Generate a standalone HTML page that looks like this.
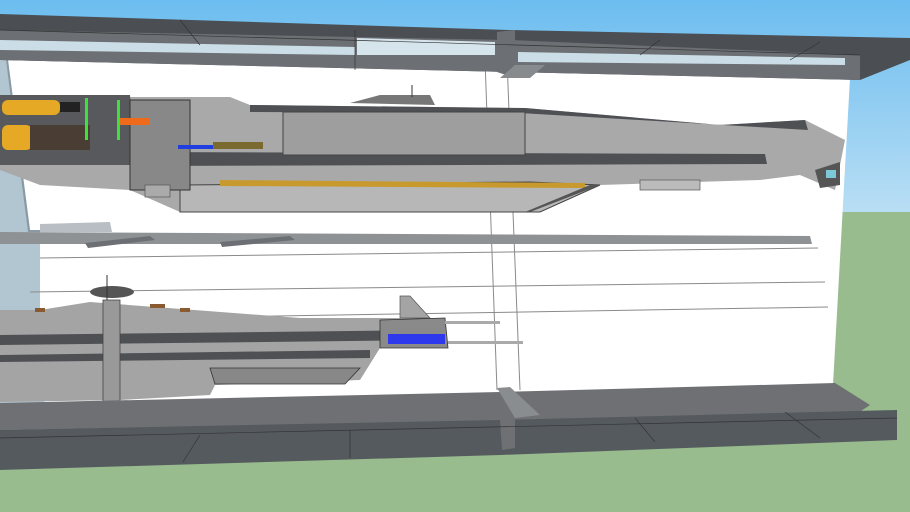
<!DOCTYPE html>
<html><head><meta charset="utf-8"><style>
html,body{margin:0;padding:0;width:910px;height:512px;overflow:hidden;background:#98bc8e}
svg{display:block}
</style></head><body>
<svg width="910" height="512" viewBox="0 0 910 512" xmlns="http://www.w3.org/2000/svg">
<defs>
<linearGradient id="sky" x1="0" y1="0" x2="0" y2="1">
<stop offset="0" stop-color="#6cbdf0"/><stop offset="1" stop-color="#b9def4"/>
</linearGradient>
</defs>
<rect width="910" height="512" fill="#98bc8e"/>
<rect width="910" height="212" fill="url(#sky)"/>
<rect x="0" y="212" width="910" height="300" fill="#98bc8e"/>
<!-- white wall -->
<polygon points="0,60 850,78 833,385 42,410 0,410" fill="#ffffff"/>
<!-- left bluish wedge -->
<polygon points="0,60 8,60 30,230 40,230 40,330 45,410 0,410" fill="#b2c6d2"/>
<polygon points="8,60 30,230 40,230 40,232 28,232 6,60" fill="#8a9aa4"/>
<!-- wall lines -->
<g stroke="#8a8a8a" stroke-width="1" fill="none">
<line x1="40" y1="258" x2="818" y2="248"/>
<line x1="30" y1="292" x2="825" y2="282"/>
<line x1="30" y1="320" x2="828" y2="307"/>
<line x1="485" y1="60" x2="497" y2="390"/>
<line x1="507" y1="60" x2="520" y2="390"/>
</g>
<!-- top slab -->
<polygon points="0,14 510,30 910,38 910,60 860,80 510,72 0,60" fill="#4b4e53"/>
<polygon points="0,30 510,40 860,55 860,80 510,72 0,60" fill="#6c6f73"/>
<polygon points="0,40 355,47 355,55 0,50" fill="#cbdde6"/>
<polygon points="357,38 495,42 495,55 357,55" fill="#d6e4ec"/>
<polygon points="518,52 845,58 845,65 518,62" fill="#cbdde6"/>
<polygon points="497,32 515,30 515,78 497,72" fill="#6c6f73"/>
<polygon points="515,65 545,65 530,78 500,78" fill="#888b8e"/>
<g stroke="#333" stroke-width="0.7">
<line x1="0" y1="30" x2="860" y2="55"/>
<line x1="180" y1="20" x2="200" y2="45"/>
<line x1="355" y1="30" x2="355" y2="70"/>
<line x1="660" y1="40" x2="640" y2="55"/>
<line x1="820" y1="42" x2="790" y2="60"/>
</g>
<!-- mid strip -->
<polygon points="0,232 810,236 812,244 0,244" fill="#8f9295"/>
<polygon points="85,243 150,236 155,240 88,248" fill="#6c6f73"/>
<polygon points="220,242 290,236 295,240 222,247" fill="#6c6f73"/>
<polygon points="40,224 110,222 112,232 40,232" fill="#b8bec4"/>
<!-- upper ship -->
<polygon points="0,170 40,185 130,190 180,212 530,212 600,185 760,180 800,175 835,190 845,140 805,120 720,125 525,108 250,105 230,97 130,97 0,100" fill="#a9a9a9"/>
<polygon points="250,105 525,108 720,125 805,120 808,130 520,113 250,112" fill="#4e5054"/>
<polygon points="180,185 530,182 600,185 540,212 180,212" fill="#b7b7b7" stroke="#444" stroke-width="1"/>
<polygon points="135,152 765,154 767,164 135,166" fill="#4e5054"/>
<polygon points="220,180 585,183 585,188 220,186" fill="#c89a2e"/>
<polygon points="283,112 525,112 525,155 283,155" fill="#9e9e9e" stroke="#444" stroke-width="1"/>
<polygon points="0,95 130,95 135,165 0,165" fill="#57595c"/>
<polygon points="130,100 190,100 190,190 130,190" fill="#888" stroke="#333" stroke-width="1"/>
<rect x="2" y="100" width="58" height="15" rx="6" fill="#e6a925"/>
<rect x="60" y="102" width="20" height="10" fill="#222"/>
<rect x="2" y="125" width="30" height="25" rx="6" fill="#e6a925"/>
<rect x="30" y="125" width="60" height="25" fill="#4a3e34"/>
<rect x="85" y="98" width="3" height="42" fill="#3ee03e"/>
<rect x="117" y="100" width="3" height="40" fill="#3ee03e"/>
<rect x="120" y="118" width="30" height="7" fill="#f06a1c"/>
<rect x="178" y="145" width="35" height="4" fill="#1f3fe0"/>
<rect x="213" y="142" width="50" height="7" fill="#7a6a30"/>
<rect x="145" y="185" width="25" height="12" fill="#aaa" stroke="#555" stroke-width="0.7"/>
<rect x="640" y="180" width="60" height="10" fill="#bbb" stroke="#555" stroke-width="0.7"/>
<polygon points="350,103 380,95 430,95 435,105" fill="#777"/>
<line x1="412" y1="85" x2="412" y2="97" stroke="#333"/>
<polygon points="815,170 840,162 840,185 820,188" fill="#555"/>
<rect x="826" y="170" width="10" height="8" fill="#7cc8d8"/>
<polygon points="530,212 600,185 590,185 525,212" fill="#555"/>
<!-- lower ship -->
<polygon points="0,310 40,310 90,302 300,318 440,318 445,348 380,348 360,380 215,385 210,395 120,400 0,402" fill="#a4a4a4"/>
<polygon points="0,335 440,330 440,340 0,345" fill="#4e5054"/>
<polygon points="0,355 370,350 370,358 0,362" fill="#4e5054"/>
<polygon points="210,368 360,368 345,384 215,384" fill="#888" stroke="#333" stroke-width="0.8"/>
<rect x="103" y="300" width="17" height="105" fill="#999" stroke="#444" stroke-width="0.8"/>
<ellipse cx="112" cy="292" rx="22" ry="6" fill="#555"/>
<line x1="107" y1="275" x2="107" y2="300" stroke="#333"/>
<polygon points="400,296 410,296 430,318 400,318" fill="#a4a4a4" stroke="#555" stroke-width="0.7"/>
<polygon points="380,320 445,318 448,348 380,348" fill="#8a8a8a" stroke="#333" stroke-width="0.8"/>
<rect x="388" y="334" width="57" height="10" fill="#2e39ee"/>
<rect x="445" y="321" width="55" height="3" fill="#aaa"/>
<rect x="448" y="341" width="75" height="3" fill="#aaa"/>
<g fill="#8a5a30"><rect x="35" y="308" width="10" height="4"/><rect x="150" y="304" width="15" height="4"/><rect x="180" y="308" width="10" height="4"/></g>
<!-- bottom slab -->
<polygon points="0,403 500,392 835,383 870,405 855,415 0,430" fill="#6e7073"/>
<polygon points="0,430 500,420 897,410 897,440 500,455 0,470" fill="#555a5f"/>
<polygon points="497,388 510,387 540,415 515,418" fill="#8a8d90"/>
<polygon points="500,420 515,418 515,448 502,450" fill="#6e7073"/>
<g stroke="#333" stroke-width="0.7">
<line x1="0" y1="438" x2="897" y2="418"/>
<line x1="200" y1="435" x2="183" y2="462"/>
<line x1="350" y1="430" x2="350" y2="458"/>
<line x1="635" y1="418" x2="655" y2="442"/>
<line x1="785" y1="412" x2="820" y2="438"/>
</g>
</svg>
</body></html>
